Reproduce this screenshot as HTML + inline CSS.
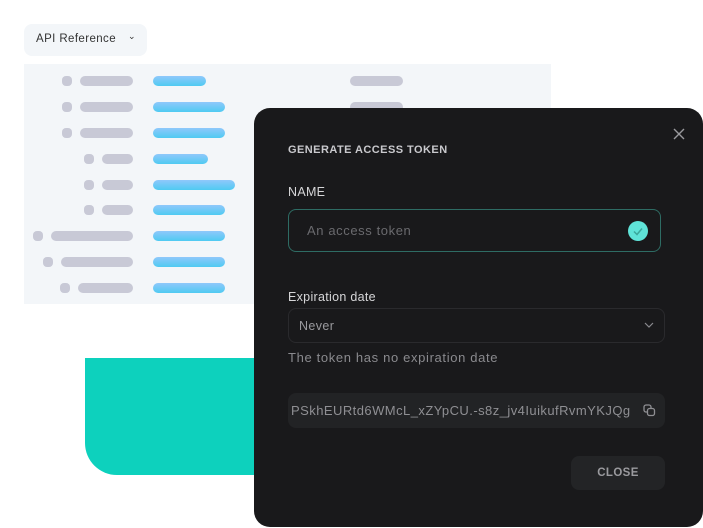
<!DOCTYPE html>
<html><head><meta charset="utf-8"><style>
*{margin:0;padding:0;box-sizing:border-box}
body{width:703px;height:528px;background:#fff;position:relative;overflow:hidden;font-family:"Liberation Sans",sans-serif}
.a{position:absolute}
.dot{position:absolute;width:10px;height:10px;border-radius:4px;background:#c8c9d6}
.g{position:absolute;height:10px;border-radius:5px;background:#c8c9d6}
.b{position:absolute;height:10px;border-radius:5px;background:linear-gradient(#8fc8fb,#4fcaf2)}
.lbl{position:absolute;left:288px;color:#d6d6d8;font-size:12.5px;letter-spacing:0.3px}
</style></head><body>
<div class="a" style="left:24px;top:24px;width:123px;height:32px;background:#f3f6f9;border-radius:8px;font-size:11.5px;color:#333;padding:9px 0 0 12px;letter-spacing:0.4px">API Reference <span style="position:absolute;left:104px;top:7px;font-size:9px">&#8964;</span></div>
<div class="a" style="left:24px;top:64px;width:527px;height:240px;background:#f3f6f9"></div>
<div class="dot" style="left:62px;top:76px"></div><div class="g" style="left:80px;top:76px;width:53px"></div><div class="b" style="left:153px;top:76px;width:53px"></div>
<div class="dot" style="left:62px;top:102px"></div><div class="g" style="left:80px;top:102px;width:53px"></div><div class="b" style="left:153px;top:102px;width:72px"></div>
<div class="dot" style="left:62px;top:128px"></div><div class="g" style="left:80px;top:128px;width:53px"></div><div class="b" style="left:153px;top:128px;width:72px"></div>
<div class="dot" style="left:84px;top:154px"></div><div class="g" style="left:102px;top:154px;width:31px"></div><div class="b" style="left:153px;top:154px;width:55px"></div>
<div class="dot" style="left:84px;top:180px"></div><div class="g" style="left:102px;top:180px;width:31px"></div><div class="b" style="left:153px;top:180px;width:82px"></div>
<div class="dot" style="left:84px;top:205px"></div><div class="g" style="left:102px;top:205px;width:31px"></div><div class="b" style="left:153px;top:205px;width:72px"></div>
<div class="dot" style="left:33px;top:231px"></div><div class="g" style="left:51px;top:231px;width:82px"></div><div class="b" style="left:153px;top:231px;width:72px"></div>
<div class="dot" style="left:43px;top:257px"></div><div class="g" style="left:61px;top:257px;width:72px"></div><div class="b" style="left:153px;top:257px;width:72px"></div>
<div class="dot" style="left:60px;top:283px"></div><div class="g" style="left:78px;top:283px;width:55px"></div><div class="b" style="left:153px;top:283px;width:72px"></div>
<div class="g" style="left:350px;top:76px;width:53px"></div><div class="g" style="left:350px;top:102px;width:53px"></div>
<div class="a" style="left:85px;top:358px;width:200px;height:117px;background:#0dd1bd;border-radius:0 0 0 32px"></div>
<div class="a" style="left:254px;top:108px;width:449px;height:419px;background:#19191b;border-radius:16px"></div>
<svg class="a" style="left:673px;top:128px" width="12" height="12"><path d="M1 1L11 11M11 1L1 11" stroke="#9a9a9e" stroke-width="1.4"/></svg>
<div class="lbl" style="top:144px;font-size:11px;font-weight:bold;color:#c9c9cd;letter-spacing:0.45px">GENERATE ACCESS TOKEN</div>
<div class="lbl" style="top:185px">NAME</div>
<div class="a" style="left:288px;top:209px;width:373px;height:43px;border:1.5px solid #2e6c64;border-radius:8px;font-size:13px;color:#6a6a6e;padding:13px 0 0 18px;letter-spacing:0.6px">An access token</div>
<div class="a" style="left:628px;top:221px;width:20px;height:20px;border-radius:50%;background:#5fe3d8"></div>
<svg class="a" style="left:628px;top:221px" width="20" height="20"><path d="M6 10.5l3 3 5-6" stroke="#3aa79c" stroke-width="1.5" fill="none"/></svg>
<div class="lbl" style="top:290px">Expiration date</div>
<div class="a" style="left:288px;top:308px;width:377px;height:35px;border:1px solid #2a2a2d;border-radius:8px;font-size:12.5px;color:#9a9a9e;padding:10px 0 0 10px;letter-spacing:0.4px">Never</div>
<svg class="a" style="left:644px;top:322px" width="10" height="6"><path d="M1 1l4 4 4-4" stroke="#8a8a8e" stroke-width="1.2" fill="none"/></svg>
<div class="lbl" style="top:350px;color:#8a8a8e;font-size:13px;letter-spacing:0.65px">The token has no expiration date</div>
<div class="a" style="left:288px;top:393px;width:377px;height:35px;background:#222325;border-radius:8px;font-size:13px;color:#8f8f93;padding:10px 0 0 3px;letter-spacing:0.45px;white-space:nowrap">PSkhEURtd6WMcL_xZYpCU.-s8z_jv4IuikufRvmYKJQg</div>
<svg class="a" style="left:643px;top:404px" width="13" height="13"><rect x="1" y="1" width="7" height="7" rx="2" stroke="#8f8f93" fill="none" stroke-width="1.3"/><rect x="4.5" y="4.5" width="7" height="7" rx="2" stroke="#8f8f93" fill="#222325" stroke-width="1.3"/></svg>
<div class="a" style="left:571px;top:456px;width:94px;height:34px;background:#232426;border-radius:8px;font-size:11.5px;font-weight:bold;color:#9a9a9e;text-align:center;line-height:34px;letter-spacing:0.4px">CLOSE</div>
</body></html>
